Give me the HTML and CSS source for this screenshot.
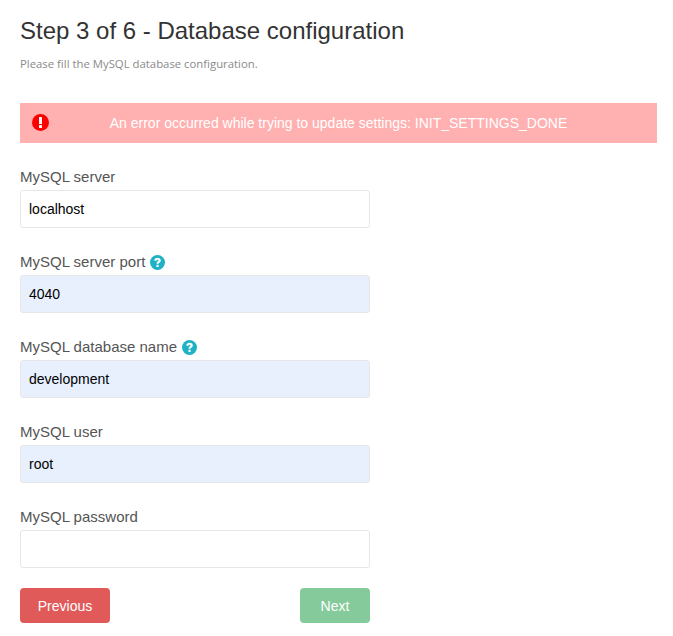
FILE: index.html
```html
<!DOCTYPE html>
<html lang="en">
<head>
 <meta charset="utf-8">
 <title>Database configuration</title>
 <link rel="stylesheet" href="styles.css">
</head>
<body>
 <div class="wizard">
 <h1>Step 3 of 6 - Database configuration</h1>
 <p class="hint">Please fill the MySQL database configuration.</p>

 <div class="alert">
 <svg class="alert-icon" viewBox="0 0 16 16" width="17" height="17">
 <circle cx="8" cy="8" r="8" fill="#ff0000"/>
 <rect x="6.6" y="2.8" width="2.8" height="6.6" rx="0.5" fill="#ffffff"/>
 <rect x="6.6" y="10.4" width="2.8" height="2.8" rx="0.5" fill="#ffffff"/>
 </svg>
 <span class="alert-text">An error occurred while trying to update settings: INIT_SETTINGS_DONE</span>
 </div>

 <form class="fields">
 <div class="field">
 <label>MySQL server</label>
 <input type="text" value="localhost">
 </div>
 <div class="field">
 <label>MySQL server port
 <svg class="help" viewBox="0 0 16 16" width="15" height="15">
 <circle cx="8" cy="8" r="8" fill="#1fb1c4"/>
 <path d="M4.6 6.1c0-2 1.5-3.2 3.5-3.2s3.4 1.2 3.4 2.9c0 2.2-2.3 2.2-2.3 3.6H6.9c0-2.5 2.2-2.5 2.2-3.5 0-.5-.5-.9-1.1-.9-.7 0-1.1.5-1.2 1.2z" fill="#ffffff"/>
 <rect x="6.9" y="10.4" width="2.3" height="2.4" rx="0.3" fill="#ffffff"/>
 </svg>
 </label>
 <input class="filled" type="text" value="4040">
 </div>
 <div class="field">
 <label>MySQL database name
 <svg class="help" viewBox="0 0 16 16" width="15" height="15">
 <circle cx="8" cy="8" r="8" fill="#1fb1c4"/>
 <path d="M4.6 6.1c0-2 1.5-3.2 3.5-3.2s3.4 1.2 3.4 2.9c0 2.2-2.3 2.2-2.3 3.6H6.9c0-2.5 2.2-2.5 2.2-3.5 0-.5-.5-.9-1.1-.9-.7 0-1.1.5-1.2 1.2z" fill="#ffffff"/>
 <rect x="6.9" y="10.4" width="2.3" height="2.4" rx="0.3" fill="#ffffff"/>
 </svg>
 </label>
 <input class="filled" type="text" value="development">
 </div>
 <div class="field">
 <label>MySQL user</label>
 <input class="filled" type="text" value="root">
 </div>
 <div class="field">
 <label>MySQL password</label>
 <input type="text" value="">
 </div>
 <div class="buttons">
 <button type="button" class="btn btn-prev">Previous</button>
 <button type="button" class="btn btn-next">Next</button>
 </div>
 </form>
 </div>
</body>
</html>
```

FILE: styles.css
```css
body {
 margin: 0;
 background: #ffffff;
 color: #333333;
 font-family: "Liberation Sans", Arial, sans-serif;
 font-size: 14px;
}

.wizard {
 padding: 16px 16px 13px 20px;
}

h1 {
 margin: 0;
 font-size: 24px;
 font-weight: 400;
 line-height: 30px;
 color: #333333;
}

.hint {
 margin: 10px 0 0;
 font-family: "Open Sans", sans-serif;
 font-size: 11.35px;
 line-height: 16px;
 color: #8a8a8a;
}

.alert {
 position: relative;
 display: flex;
 align-items: center;
 justify-content: center;
 height: 40px;
 margin-top: 31px;
 background: #ffb0b0;
 color: #ffffff;
}

.alert-icon {
 position: absolute;
 left: 12px;
 top: 11px;
}

.fields {
 width: 350px;
 margin-top: 23px;
}

.field + .field {
 margin-top: 23px;
}

.field label {
 display: flex;
 align-items: center;
 gap: 5px;
 height: 20px;
 margin-bottom: 4px;
 font-size: 15px;
 color: #555555;
}

.help {
 margin-top: 2px;
}

.field input {
 display: block;
 box-sizing: border-box;
 width: 100%;
 height: 38px;
 padding: 0 8px;
 border: 1px solid #e6e6e6;
 border-radius: 3px;
 background: #ffffff;
 color: #000000;
 font-family: "Liberation Sans", Arial, sans-serif;
 font-size: 14px;
}

.field input.filled {
 background: #e8f0fe;
}

.buttons {
 display: flex;
 justify-content: space-between;
 margin-top: 20px;
}

.btn {
 height: 35px;
 border: none;
 border-radius: 4px;
 color: #ffffff;
 font-family: "Liberation Sans", Arial, sans-serif;
 font-size: 14px;
}

.btn-prev {
 width: 90px;
 background: #e05a5a;
}

.btn-next {
 width: 70px;
 background: #84ca9b;
}
```
